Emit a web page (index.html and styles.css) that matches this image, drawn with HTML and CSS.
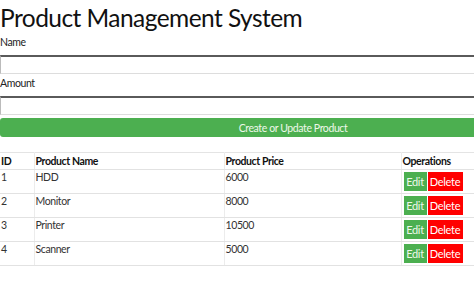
FILE: index.html
```html
<html>
<head>
<meta charset="utf-8">
<title>Product Management System</title>
<link rel="stylesheet" href="styles.css">
</head>
<body>
	<div class="page">
		<h1>Product Management System</h1>
		<div class="field">
			<label for="name">Name</label>
			<input type="text" id="name">
		</div>
		<div class="field">
			<label for="amount">Amount</label>
			<input type="text" id="amount">
		</div>
		<button class="save">Create or Update Product</button>

		<table class="products">
			<thead>
				<tr>
					<th class="col-id">ID</th>
					<th class="col-name">Product Name</th>
					<th class="col-price">Product Price</th>
					<th>Operations</th>
				</tr>
			</thead>
			<tbody>
				<tr>
					<td>1</td><td>HDD</td><td>6000</td>
					<td class="ops"><button class="edit">Edit</button><button class="delete">Delete</button></td>
				</tr>
				<tr>
					<td>2</td><td>Monitor</td><td>8000</td>
					<td class="ops"><button class="edit">Edit</button><button class="delete">Delete</button></td>
				</tr>
				<tr>
					<td>3</td><td>Printer</td><td>10500</td>
					<td class="ops"><button class="edit">Edit</button><button class="delete">Delete</button></td>
				</tr>
				<tr>
					<td>4</td><td>Scanner</td><td>5000</td>
					<td class="ops"><button class="edit">Edit</button><button class="delete">Delete</button></td>
				</tr>
			</tbody>
		</table>
	</div>
</body>
</html>
```

FILE: styles.css
```css
* {
	margin: 0;
	padding: 0;
	box-sizing: border-box;
}

body {
	overflow: hidden;
	font-family: Lato, "Open Sans", sans-serif;
	font-size: 10.5px;
	letter-spacing: -0.4px;
	color: #222;
	background: #fff;
}

.page {
	width: 586px;
}

h1 {
	font-weight: 400;
	font-size: 24.5px;
	line-height: 35px;
	letter-spacing: -0.55px;
	color: #111;
}

.field label {
	display: block;
	font-size: 10.5px;
	line-height: 12px;
	margin-top: 1px;
	margin-bottom: 7px;
	color: #222;
}

.field + .field label {
	margin-top: 3px;
}

.field input {
	display: block;
	width: 100%;
	height: 19px;
	border: none;
	border-top: 2px solid #5a5a5a;
	border-left: 1px solid #bbb;
	border-bottom: 1px solid #ddd;
	background: #fff;
}

.save {
	display: block;
	width: 100%;
	height: 19px;
	margin-top: 3px;
	border: none;
	border-radius: 3px;
	background-color: #4caf50;
	color: #eef8ea;
	font-family: inherit;
	font-size: 10.5px;
	letter-spacing: -0.4px;
}

.products {
	width: 100%;
	margin-top: 15px;
	border-collapse: collapse;
	font-size: 10.5px;
	line-height: 12px;
	border-top: 1px solid #e4e4e4;
}

.products th,
.products td {
	text-align: left;
	vertical-align: top;
	padding: 1px 1px 0;
	border-bottom: 1px solid #e2e2e2;
	border-left: 1px solid #ececec;
}

.products th:first-child,
.products td:first-child {
	border-left: none;
}

.products th {
	padding: 2px 1px 2px;
	font-weight: 700;
	color: #111;
}

.products td {
	color: #333;
}

.col-id {
	width: 34px;
}

.col-name {
	width: 190px;
}

.col-price {
	width: 177px;
}

.products td.ops {
	padding: 2px 2px 2px;
}

.edit,
.delete {
	display: inline-block;
	height: 19px;
	border: none;
	color: #fff;
	font-family: inherit;
	font-size: 11px;
	letter-spacing: -0.3px;
	padding: 0;
	vertical-align: top;
}

.edit {
	width: 23px;
	background-color: #4caf50;
	color: #eef8ea;
	margin-right: 1px;
}

.delete {
	width: 35px;
	background-color: #f00;
}
```
